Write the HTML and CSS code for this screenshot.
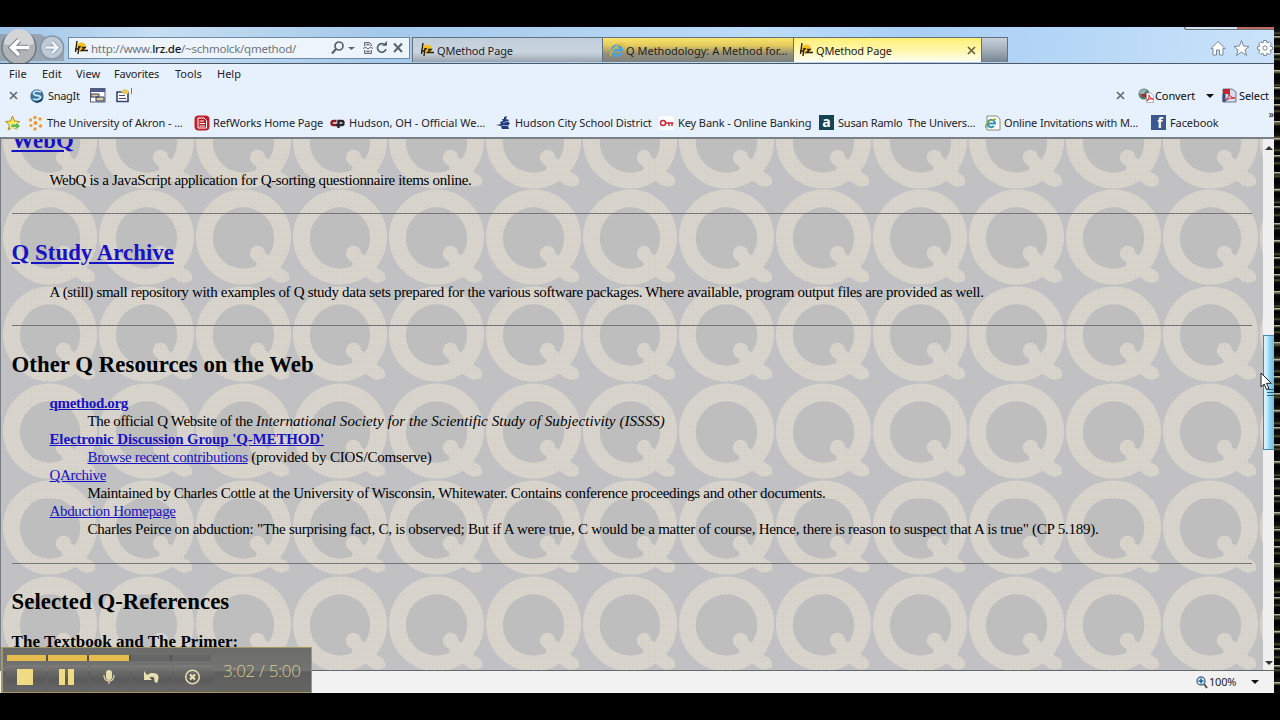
FILE: index.html
```
<!DOCTYPE html>
<html>
  <head>
    <meta charset="utf-8" />
    <title>QMethod Page</title>
    <link rel="stylesheet" href="styles.css">
  </head>
  <body>
    <svg class="defs" width="0" height="0">
      <symbol id="lrz" viewBox="0 0 16 16">
        <circle cx="8.500" cy="7" r="4.500" fill="#f5c021" />
        <path d="M4 1 L2.500 12 M2 9 H5 M6 6 L5 14 M5.500 8.500 Q6.500 6 8 7 M9 7.500 H12 L8.500 10.500 H15" fill="none" stroke="#2b2109" stroke-width="1.400" />
      </symbol>
      <symbol id="ie" viewBox="0 0 16 16">
        <path d="M12.500 11 A5 5 0 1 1 13 8 H4.500" fill="none" stroke="#4aa3da" stroke-width="2.600" />
        <path d="M2 14 C-1 12 8 1 14 2 C16 3 14.500 5 14 6" fill="none" stroke="#e5b93b" stroke-width="1.200" />
      </symbol>
    </svg>

    <div class="screen">
      <div class="window">
        <div class="titlebar">
          <div class="nav">
            <svg width="68" height="36" viewBox="0 0 68 36">
              <path d="M0 7 H40 Q48 12 55 11 L64 18 V34 H0Z" fill="#91989f" opacity=".75" />
              <circle cx="19" cy="20.500" r="17" fill="#b1b4b7" stroke="#707880" stroke-width="1.500" />
              <path d="M4 17 A15 15 0 0 1 34 17 Q19 22 4 17Z" fill="#d3d5d7" />
              <path d="M28 20.500 H12 M19 13 L11.500 20.500 L19 28" fill="none" stroke="#777e85" stroke-width="5.500" />
              <path d="M29 20.500 H12 M19 13 L11.500 20.500 L19 28" fill="none" stroke="#fff" stroke-width="3.500" />
              <circle cx="52" cy="20.500" r="11.500" fill="#bdc9d5" stroke="#8494a5" stroke-width="1.500" />
              <path d="M46 20.500 H57 M52 15 L57.500 20.500 L52 26" fill="none" stroke="#8999aa" stroke-width="4" />
              <path d="M46 20.500 H57 M52 15 L57.500 20.500 L52 26" fill="none" stroke="#f0f5fa" stroke-width="2.500" />
            </svg>
          </div>
          <div class="address">
            <svg width="16" height="16"><use href="#lrz" /></svg>
            <span class="url">http://www.<b>lrz.de</b>/~schmolck/qmethod/</span>
            <svg class="tools" width="76" height="18" viewBox="0 0 76 18">
              <circle cx="9" cy="7" r="4" fill="none" stroke="#59616c" stroke-width="1.700" />
              <path d="M6 10 L2 14.500" stroke="#59616c" stroke-width="2.200" />
              <path d="M18 8 H25 L21.500 11Z" fill="#59616c" />
              <path d="M34.500 7 V3.500 H39.500 L41.500 5.500 V7 M34.500 11 V14.500 H41.500 V11 M33 9.500 L35.500 8 L38 10 L40.500 8 L43 9.500 M36.500 5.500 H39 M36.500 12.500 H39.500" fill="#c9ced4" stroke="#6b7078" />
              <path d="M55 6 A4.300 4.300 0 1 0 56 10" fill="none" stroke="#59616c" stroke-width="1.700" />
              <path d="M52 6.800 H57 V2Z" fill="#59616c" />
              <path d="M64 4.500 L72 13 M72 4.500 L64 13" stroke="#59616c" stroke-width="2" />
            </svg>
          </div>
          <div class="tabs">
            <div class="tab"><svg width="16" height="16"><use href="#lrz" /></svg><span>QMethod Page</span></div>
            <div class="tab alert"><svg width="16" height="16"><use href="#ie" /></svg><span>Q Methodology: A Method for...</span></div>
            <div class="tab active"><svg width="16" height="16"><use href="#lrz" /></svg><span>QMethod Page</span>
              <svg class="close" width="9" height="9" viewBox="0 0 9 9"><path d="M1 1 L8 8 M8 1 L1 8" stroke="#69643e" stroke-width="1.700" /></svg>
            </div>
            <div class="tab new"></div>
          </div>
          <svg class="commands" width="66" height="36" viewBox="0 0 66 36">
            <g fill="#fff" stroke="#7d8794">
              <path d="M3 21.500 L10 14.500 L17 21.500 H15 V28 H11.500 V23 H8.500 V28 H5 V21.500Z" />
              <path d="M33.500 13.500 L35.500 19 L41 19.500 L37 23 L38.500 28.500 L33.500 25 L28.500 28.500 L30 23 L26 19.500 L31.500 19Z" />
              <path d="M55.500 13.500 H58.500 L59 16 L61.500 14.800 L63.500 17 L62 19 L64.500 20 V22.500 L62 23.200 L63.300 25.500 L61.200 27.500 L59 26.200 L58.300 28.500 H55.500 L55 26.200 L52.600 27.400 L50.700 25.400 L52 23.200 L49.500 22.500 V19.700 L52 19 L50.700 16.800 L52.700 14.800 L55 16Z" />
              <circle cx="57" cy="21" r="2.200" />
            </g>
          </svg>
          <div class="caption-buttons"></div>
        </div>

        <div class="menubar">
          <span>File</span><span>Edit</span><span>View</span><span>Favorites</span><span>Tools</span><span>Help</span>
        </div>

        <div class="toolbar">
          <svg width="9" height="9" viewBox="0 0 9 9"><path d="M1 1 L8 8 M8 1 L1 8" stroke="#666b70" stroke-width="1.700" /></svg>
          <svg class="snag-icon" width="14" height="14" viewBox="0 0 14 14">
            <circle cx="7" cy="7" r="6.700" fill="#3c719e" />
            <path d="M11 3 C3 0 1 6 7 6.500 C14 7 10 12 3 10" fill="none" stroke="#c6e5f5" stroke-width="1.800" />
            <path d="M1 11 Q8 15 13 8 L12 12 L7 14Z" fill="#193d5e" />
          </svg>
          <span class="snag">SnagIt</span>
          <svg class="window-icon" width="16" height="15" viewBox="0 0 16 15">
            <rect x=".500" y=".500" width="14.500" height="13.500" fill="#fff" stroke="#555c78" />
            <path d="M1 1 H15 V4 H1Z" fill="#4d5b8f" />
            <path d="M1 6 H9 V9 H1Z M6 9 H14 V13 H6Z" fill="#d8ca99" stroke="#333c62" />
          </svg>
          <svg class="note-icon" width="17" height="15" viewBox="0 0 17 15">
            <path d="M1 4 H12 V13.500 H1Z" fill="#fff" stroke="#384171" stroke-width="1.600" />
            <path d="M3 7.500 H9 M3 10.500 H10" stroke="#444b73" />
            <path d="M5 3 L9 1 L13 3 L12 6 H7Z" fill="#e5c85b" />
            <path d="M15.500 0 V6" stroke="#777" />
          </svg>
          <div class="pdf-tools">
            <svg width="9" height="9" viewBox="0 0 9 9"><path d="M1 1 L8 8 M8 1 L1 8" stroke="#666b70" stroke-width="1.700" /></svg>
            <svg class="convert-icon" width="16" height="15" viewBox="0 0 16 15">
              <circle cx="6" cy="6" r="5.500" fill="#527f62" />
              <path d="M1 4 Q4 0 9 2 L6 5 L8 7 L3 8Z" fill="#9ab4bf" />
              <path d="M2 6 H8 V4 L12 8 L8 12 V9 H5Z" fill="#9d2632" />
              <path d="M8.500 5 H13 L15.500 8 V14.500 H8.500Z" fill="#fff" stroke="#999" stroke-width=".700" />
              <path d="M9 13 Q12 10 11 7 Q12 11 15 11 Q11 10 9 13" fill="none" stroke="#da252c" />
            </svg>
            <span>Convert</span>
            <i class="arrow"></i>
            <svg class="select-icon" width="15" height="15" viewBox="0 0 15 15">
              <path d="M1 1 H10 L14 4 V14 H1Z" fill="#d7dcea" stroke="#697693" />
              <path d="M1 1 H8 V6 H1Z" fill="#c5242b" />
              <path d="M3 13 Q8 8 7 5 Q8 10 13 10 Q7 9 3 13" fill="none" stroke="#c5242b" />
              <path d="M2 6 V14" stroke="#355285" stroke-width="3" />
            </svg>
            <span>Select</span>
          </div>
        </div>

        <div class="favorites">
          <div class="fav">
            <svg width="16" height="16" viewBox="0 0 16 16"><path d="M7.500 1 L9.500 6 L14.500 6.500 L10.500 10 L12 15 L7.500 12 L3 15 L4.500 10 L.700 6.500 L5.500 6Z" fill="#ffe84d" stroke="#ab8b23" /><path d="M6 9 H11 V7 L15.500 11 L11 15 V12.500 H6Z" fill="#63b946" stroke="#fff" stroke-width=".600" /></svg>
          </div>
          <div class="fav">
            <svg width="16" height="16" viewBox="0 0 16 16"><g fill="#f09a32"><circle cx="7" cy="2.500" r="1.700" /><circle cx="12" cy="4" r="1.700" /><circle cx="2.500" cy="5" r="1.700" /><circle cx="7.500" cy="8" r="2" /><circle cx="3" cy="10.500" r="1.600" /><circle cx="7" cy="14" r="1.700" /><circle cx="12.500" cy="11" r="1.800" /></g></svg>
            <span>The University of Akron - ...</span>
          </div>
          <div class="fav">
            <svg width="16" height="16" viewBox="0 0 16 16"><rect x=".500" y=".500" width="15" height="15" rx="4" fill="#c4202b" /><path d="M4 3 H10 L12.500 5.500 V13 H4Z" fill="#b51625" stroke="#fff" /><path d="M5.500 6 H10 M5.500 8.500 H11 M5.500 11 H11" stroke="#fff" /></svg>
            <span>RefWorks Home Page</span>
          </div>
          <div class="fav">
            <svg width="16" height="16" viewBox="0 0 16 16"><path d="M6.500 6 H3.500 Q1.500 6 1.500 8 Q1.500 10 3.500 10 H7" fill="none" stroke="#8d1c22" stroke-width="2.400" /><path d="M8.500 13 V6 H12 Q13.500 6 13.500 8 Q13.500 10 12 10 H6" fill="none" stroke="#30252b" stroke-width="2.400" /></svg>
            <span class="hudson">Hudson, OH - Official We...</span>
          </div>
          <div class="fav">
            <svg width="16" height="16" viewBox="0 0 16 16"><path d="M8 2 L11 1 L10 4 L13 5 L12 7 L14 8 L12 11 L13 14 H6 L5 11 L0 10 L5 9 L4 7 L7 6 L6 4 L8 4Z" fill="#223a7b" /><path d="M7 8 L12 6 M6 10.500 H12" stroke="#90a6d5" /></svg>
            <span>Hudson City School District</span>
          </div>
          <div class="fav">
            <svg width="16" height="16" viewBox="0 0 16 16"><path d="M0 1 H15 V15 H0Z" fill="#fafcff" /><circle cx="4" cy="8" r="2.500" fill="none" stroke="#cc2b34" stroke-width="1.500" /><path d="M6.500 8 H14.500 M10 8 V11 M13 8 V11" stroke="#cc2b34" stroke-width="1.500" /></svg>
            <span>Key Bank - Online Banking</span>
          </div>
          <div class="fav">
            <b class="letter-a">a</b>
            <span class="ramlo">Susan Ramlo&nbsp; The Univers...</span>
          </div>
          <div class="fav">
            <svg width="16" height="16" viewBox="0 0 16 16"><path d="M2 1 H12 L15 4 V15 H2Z" fill="#fff" stroke="#888c75" /><path d="M9 11 A3.700 3.700 0 1 1 10 8.500 H3" fill="none" stroke="#3493bb" stroke-width="2" /><path d="M1 13 Q-1 10 6 5 L11 4" fill="none" stroke="#94aa30" stroke-width="1.300" /></svg>
            <span class="invite">Online Invitations with M...</span>
          </div>
          <div class="fav">
            <b class="letter-f">f</b>
            <span>Facebook</span>
          </div>
          <span class="more">»</span>
        </div>

        <div class="page">
          <div class="content">
            <h2><a>WebQ</a></h2>
            <p class="webq">WebQ is a JavaScript application for Q-sorting questionnaire items online.</p>
            <hr />
            <h2><a>Q Study Archive</a></h2>
            <p>A (still) small repository with examples of Q study data sets prepared for the various software packages. Where available, program output files are provided as well.</p>
            <hr />
            <h2>Other Q Resources on the Web</h2>
            <dl>
              <dt><a><b>qmethod.org</b></a></dt>
              <dd>The official Q Website of the <i>International Society for the Scientific Study of Subjectivity (ISSSS)</i></dd>
              <dt><a><b class="group">Electronic Discussion Group 'Q-METHOD'</b></a></dt>
              <dd class="browse"><a>Browse recent contributions</a> (provided by CIOS/Comserve)</dd>
              <dt><a>QArchive</a></dt>
              <dd>Maintained by Charles Cottle at the University of Wisconsin, Whitewater. Contains conference proceedings and other documents.</dd>
              <dt><a>Abduction Homepage</a></dt>
              <dd class="peirce">Charles Peirce on abduction: "The surprising fact, C, is observed; But if A were true, C would be a matter of course, Hence, there is reason to suspect that A is true" (CP 5.189).</dd>
            </dl>
            <hr />
            <h2>Selected Q-References</h2>
            <h3>The Textbook and The Primer:</h3>
          </div>
          <div class="scrollbar">
            <i class="up"></i>
            <div class="thumb"><i></i><i></i><i></i></div>
            <i class="down"></i>
          </div>
        </div>

        <div class="statusbar">
          <svg width="12" height="13" viewBox="0 0 12 13"><circle cx="5" cy="5" r="4" fill="#e3f1fb" stroke="#4a7194" stroke-width="1.400" /><path d="M2.500 5 H7.500 M5 2.500 V7.500" stroke="#246297" stroke-width="1.500" /><path d="M8 8 L11 12" stroke="#5b523f" stroke-width="2" /></svg>
          <span>100%</span>
          <i class="arrow"></i>
        </div>
      </div>
      <div class="glitch"></div>
    </div>

    <div class="recorder">
      <div class="controls">
        <div class="progress"><i class="done"></i><i class="done"></i><i class="done"></i><i></i><i></i></div>
        <div class="buttons">
          <div><svg width="40" height="24" viewBox="0 0 40 24"><path d="M11 4 H27 V20 H11Z" /></svg></div>
          <div><svg width="40" height="24" viewBox="0 0 40 24"><path d="M11 4 H17 V20 H11Z M20 4 H26 V20 H20Z" /></svg></div>
          <div><svg width="40" height="24" viewBox="0 0 40 24"><rect x="16" y="5" width="6" height="10" rx="3" /><path d="M14 10 Q14 16 19 16 Q24 16 24 10 M19 16 V19" fill="none" stroke="#d9cf9f" stroke-width="1.300" /></svg></div>
          <div><svg width="40" height="24" viewBox="0 0 40 24"><path d="M12 6 V15 H20 L17.500 12.500 Q23 10 22.500 17 L25 18 Q30 7 19 8 L15 10Z" /></svg></div>
          <div><svg width="40" height="24" viewBox="0 0 40 24"><circle cx="18.500" cy="12" r="6.800" fill="none" stroke="#e8dfb1" stroke-width="1.500" /><path d="M16 9.500 L21 14.500 M21 9.500 L16 14.500" stroke="#e8dfb1" stroke-width="2.300" /></svg></div>
        </div>
      </div>
      <div class="time">3:02 / 5:00</div>
    </div>

    <svg class="cursor" width="13" height="19" viewBox="0 0 13 19"><path d="M1 1 V15 L4.200 12 L6.500 17.500 L9 16.500 L6.500 11.300 H11.300Z" fill="#fff" stroke="#222" /></svg>
  </body>
</html>
```

FILE: styles.css
```
/* Recorded browser window */
body {
  margin: 0;
  padding: 27px 0 0;
  width: 1280px;
  height: 720px;
  box-sizing: border-box;
  overflow: hidden;
  background-color: #000;
  font-family: "Noto Sans", "Open Sans", sans-serif;
  font-size: 11px;
  color: #1f2226;
}

svg {
  display: block;
  flex: none;
}

.defs {
  position: absolute;
}

.screen {
  display: flex;
  height: 666px;
}

.window {
  display: flex;
  flex-direction: column;
  width: 1274px;
  overflow: hidden;
  background-color: #e7f1fd;
  white-space: nowrap;
}

.glitch {
  width: 6px;
  background:
    repeating-linear-gradient(to bottom, transparent 0, transparent 9px, #dddcd0 9px, #87886f 10px, transparent 12px, transparent 17px),
    repeating-linear-gradient(to bottom, #050505 0, #141510 5px, #55593a 6px, #090909 8px, #000 13px);
}

/* Title bar */
.titlebar {
  position: relative;
  display: flex;
  height: 36px;
  border-bottom: 1px solid #4d5966;
  background: linear-gradient(100deg, #9dc3e6 0%, #c7def3 12%, #a4c9ea 30%, #bcdcf8 60%, #a9cff5 72%, #b3d5f6 82%, #cbe3fa 100%);
}

.nav {
  width: 68px;
}

.address {
  display: flex;
  align-items: center;
  width: 342px;
  height: 22px;
  margin-top: 10px;
  padding-left: 4px;
  box-sizing: border-box;
  border: 1px solid #6f8aa5;
  background-color: #edf4fc;
}

.url {
  width: 239px;
  margin-left: 2px;
  font-size: 11.5px;
  letter-spacing: -0.24px;
  color: #6f767d;
}

.url b {
  font-weight: 500;
  color: #16191c;
}

.tabs {
  display: flex;
  margin: 10px 0 0 2px;
}

.tab {
  display: flex;
  align-items: center;
  width: 190px;
  height: 25px;
  padding-left: 6px;
  box-sizing: border-box;
  border: 1px solid #63707d;
  border-width: 1px 0 0 1px;
  background: linear-gradient(#c1cedb, #c9d4df 60%, #99a4b0);
}

.tab span {
  width: 80px;
  margin-left: 2px;
  letter-spacing: -0.15px;
}

.tab.alert {
  width: 191px;
  background: linear-gradient(#fae46e, #e5cc5c 30%, #969078 65%, #7c8080);
}

.tab.alert span {
  margin-left: 1px;
  letter-spacing: 0;
}

.tab.active {
  width: 188px;
  padding-left: 4px;
  background: linear-gradient(#ffef75, #fff6a5 45%, #fffff4);
}

.tab .close {
  margin-left: 71px;
}

.tab.new {
  width: 27px;
  border-right-width: 1px;
  background: linear-gradient(#c6d0da, #a3aeb9 50%, #768390);
}

.commands {
  margin-left: auto;
}

.caption-buttons {
  position: absolute;
  top: 0;
  right: 0;
  width: 90px;
  height: 3px;
  border: 1px solid #68727b;
  border-width: 0 0 1px 1px;
  border-radius: 0 0 0 4px;
  box-sizing: border-box;
  background: linear-gradient(90deg, #d3e1ef 58%, #bd6d60 58%);
}

/* Menus and toolbars */
.menubar {
  display: flex;
  align-items: center;
  height: 19px;
}

.menubar span {
  box-sizing: border-box;
}

.menubar span:nth-child(1) {
  width: 42px;
  padding-left: 9px;
}

.menubar span:nth-child(2) {
  width: 34px;
}

.menubar span:nth-child(3) {
  width: 38px;
}

.menubar span:nth-child(4) {
  width: 61px;
  letter-spacing: -0.2px;
}

.menubar span:nth-child(5) {
  width: 42px;
}

.toolbar {
  display: flex;
  align-items: center;
  height: 25px;
  padding-left: 9px;
}

.toolbar span {
  margin-top: -1px;
}

.snag-icon {
  margin-left: 12px;
}

.snag {
  width: 38px;
  margin-left: 4px;
  letter-spacing: -0.3px;
}

.window-icon {
  margin-left: 4px;
}

.note-icon {
  margin-left: 10px;
}

.pdf-tools {
  display: flex;
  align-items: center;
  width: 158px;
  margin-left: auto;
}

.convert-icon {
  margin: 0 1px 0 13px;
}

.pdf-tools span {
  color: #0b0c0d;
  letter-spacing: -0.1px;
}

.arrow {
  border: 4px solid transparent;
  border-top-color: #111;
  border-bottom-width: 0;
}

.pdf-tools .arrow {
  margin-left: 11px;
}

.select-icon {
  margin: 0 2px 0 8px;
}

.favorites {
  position: relative;
  display: grid;
  grid-template-columns: 23px 166px 136px 166px 163px 160px 166px 166px 100px;
  align-items: center;
  height: 29px;
  padding-left: 5px;
  border-bottom: 2px solid #7b8087;
}

.fav {
  display: flex;
  align-items: center;
}

.fav span {
  margin-left: 3px;
  letter-spacing: -0.1px;
}

.fav .hudson {
  letter-spacing: 0;
}

.fav .ramlo {
  margin-left: 4px;
  letter-spacing: -0.2px;
}

.fav .invite {
  letter-spacing: -0.15px;
}

.letter-a,
.letter-f {
  width: 15px;
  height: 15px;
  text-align: center;
  font: bold 14px/13px "Open Sans", sans-serif;
  color: #fff;
  background-color: #154553;
}

.letter-f {
  margin-right: 1px;
  padding-left: 3px;
  box-sizing: border-box;
  line-height: 15px;
  background-color: #3c568e;
}

.more {
  position: absolute;
  top: -2px;
  right: 0;
}

/* Web page */
.page {
  display: flex;
  height: 532px;
  box-sizing: border-box;
  border-left: 1px solid #777b83;
  border-bottom: 1px solid #65686d;
  overflow: hidden;
  font-family: "Liberation Serif", serif;
  font-size: 15px;
  line-height: 18px;
  color: #000;
  background-color: #c1c1c4;
  background-image: url("data:image/svg+xml,%3Csvg xmlns='http://www.w3.org/2000/svg' width='97' height='97' viewBox='0 0 97 97'%3E%3Cdefs%3E%3Cpattern id='d' width='2' height='2' patternUnits='userSpaceOnUse'%3E%3Crect width='2' height='2' fill='%23dad5cd'/%3E%3Crect width='1' height='1' fill='%23cfccc6'/%3E%3C/pattern%3E%3C/defs%3E%3Ccircle cx='48.500' cy='48' r='47.500' fill='url(%23d)'/%3E%3Ccircle cx='48.500' cy='49' r='30.700' fill='%23bebebe'/%3E%3Cpath d='M61 73 Q54 69 55 63 Q57 56 64 57 Q70 58 70 64 L76 68 L87 80 Q95 82 94 91 Q86 97 78 90 L62 80Z' fill='url(%23d)'/%3E%3C/svg%3E");
  background-size: 96.7px 96.7px;
  background-position: 0.6px 50.5px;
}

.content {
  width: 1240px;
  margin: -11px 0 0 10.5px;
}

h2 {
  margin: 0 0 17px;
  font-size: 22.8px;
  line-height: 26px;
  letter-spacing: 0.05px;
}

p {
  margin: 0 0 24px 38px;
  letter-spacing: -0.31px;
}

.webq {
  letter-spacing: -0.34px;
}

hr {
  height: 1px;
  margin: 0 0 26px;
  border: 0;
  background-color: #77757a;
}

dl {
  margin: -0.6px 0 24.6px 38px;
  letter-spacing: -0.325px;
}

dd {
  margin-left: 38px;
}

dd i {
  letter-spacing: 0.07px;
}

.group {
  letter-spacing: -0.14px;
}

.browse {
  letter-spacing: -0.17px;
}

.browse a {
  letter-spacing: -0.33px;
}

.peirce {
  letter-spacing: -0.245px;
}

a {
  color: #1712c4;
  text-decoration: underline;
}

dl + hr {
  margin-bottom: 25px;
}

h3 {
  margin: 0;
  font-size: 17px;
  line-height: 20px;
  letter-spacing: 0.05px;
}

.scrollbar {
  display: flex;
  flex-direction: column;
  align-items: center;
  width: 11px;
  margin-left: auto;
  padding: 7px 0 5px;
  overflow: hidden;
  box-sizing: border-box;
  background-color: #f0f0f1;
}

.up,
.down {
  border: 4px solid transparent;
  border-bottom-color: #333;
  border-top-width: 0;
}

.down {
  margin-top: auto;
  border-top: 4px solid #333;
  border-bottom-width: 0;
}

.thumb {
  width: 11px;
  height: 115px;
  margin-top: 185px;
  padding: 53px 0 0 3px;
  box-sizing: border-box;
  border: 1px solid #4589a8;
  border-right: 0;
  background: linear-gradient(90deg, #d6f1fc 20%, #93d5f1 55%, #6fbde3);
}

.thumb i {
  display: block;
  height: 1px;
  margin-bottom: 2px;
  background-color: #28617a;
}

.statusbar {
  display: flex;
  align-items: center;
  height: 22px;
  padding-left: 1196px;
  background-color: #f2f2f3;
}

.statusbar span {
  width: 42px;
  margin: -1px 0 0 1px;
  letter-spacing: -0.2px;
}

/* Recorder controls, over the page */
.recorder {
  position: absolute;
  top: 647px;
  left: 1px;
  display: flex;
  width: 311px;
  height: 46px;
  box-sizing: border-box;
  border: 1px solid #a59863;
  border-left-width: 2px;
  background: linear-gradient(#6b6b6a 0, #747473 52%, #5e5e5e 54%, #646463);
}

.controls {
  width: 204px;
  margin-left: 4px;
}

.progress {
  display: grid;
  grid-template-columns: repeat(5, 1fr);
  gap: 2px;
  height: 6px;
  margin-top: 7px;
  background-color: #555;
}

.progress i {
  background-color: #666;
}

.progress .done {
  background-color: #e6bc4e;
}

.buttons {
  display: grid;
  grid-template-columns: repeat(5, 40px);
  gap: 2px;
  margin: 4px 0 0 -1px;
}

.buttons div {
  border-radius: 3px;
  background: linear-gradient(#7c7c7b, #696968 30%, #5a5a5a 60%, #666);
}

.buttons svg {
  fill: #f0da83;
}

.buttons div:nth-child(n + 3) svg {
  fill: #e8dfb1;
}

.time {
  margin: 10px 0 0 12px;
  font: 300 17px/25px "Open Sans", sans-serif;
  letter-spacing: -0.3px;
  color: #d9cb8c;
}

.cursor {
  position: absolute;
  top: 372px;
  left: 1260px;
}
```
